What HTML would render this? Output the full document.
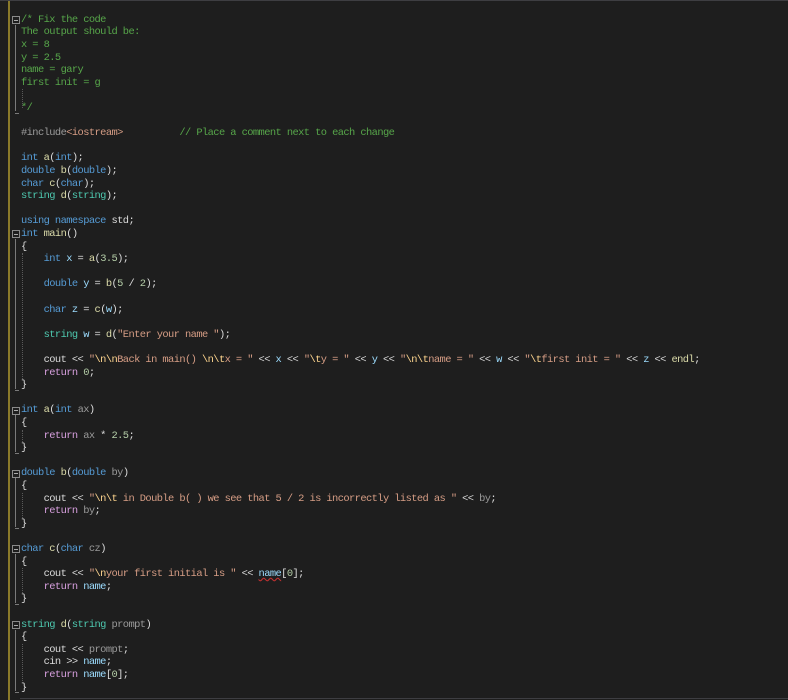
<!DOCTYPE html>
<html><head><meta charset="utf-8"><style>
html,body{margin:0;padding:0;background:#1e1e1e;width:788px;height:700px;overflow:hidden}
#ed{position:relative;width:788px;height:700px;background:#1e1e1e;border-top:1px solid #3e3e42;box-sizing:border-box;font-family:"Liberation Mono",monospace;font-size:10.4px;letter-spacing:-0.58px;color:#dcdcdc}
.l{position:absolute;left:21px;height:12.6px;line-height:12.6px;white-space:pre}
.k{color:#569cd6}.f{color:#dcdcaa}.v{color:#9cdcfe}.s{color:#d69d85}.e{color:#ffd68f}.n{color:#b5cea8}.c{color:#57a64a}.p{color:#9a9a9a}.r{color:#d8a0df}.t{color:#4ec9b0}.g{color:#9b9b9b}
.bar{position:absolute;left:8px;top:0;width:2px;height:700px;background:#8a7a2a}
.box{position:absolute;left:12px;width:6px;height:6px;border:1px solid #8a8a8a;box-sizing:content-box}
.box:after{content:"";position:absolute;left:1px;top:2.5px;width:4px;height:1px;background:#aaa}
.vl{position:absolute;left:15px;width:1px;background:#7a7a7a}
.hl{position:absolute;left:15px;width:4px;height:1px;background:#7a7a7a}
.dl{position:absolute;left:22px;width:0;border-left:1px dotted #5a5a5a}
.bot{position:absolute;left:20px;top:697px;width:768px;height:1px;background:#3e3e42}
</style></head><body><div id="ed">
<div class="bar"></div>
<div class="bot"></div>
<div id="code"></div>
<script>
var L=[
'<span class="c">/* Fix the code</span>',
'<span class="c">The output should be:</span>',
'<span class="c">x = 8</span>',
'<span class="c">y = 2.5</span>',
'<span class="c">name = gary</span>',
'<span class="c">first init = g</span>',
'',
'<span class="c">*/</span>',
'',
'<span class="g">#include</span><span class="s">&lt;iostream&gt;</span>          <span class="c">// Place a comment next to each change</span>',
'',
'<span class="k">int</span> <span class="f">a</span>(<span class="k">int</span>);',
'<span class="k">double</span> <span class="f">b</span>(<span class="k">double</span>);',
'<span class="k">char</span> <span class="f">c</span>(<span class="k">char</span>);',
'<span class="t">string</span> <span class="f">d</span>(<span class="t">string</span>);',
'',
'<span class="k">using namespace</span> std;',
'<span class="k">int</span> <span class="f">main</span>()',
'{',
'    <span class="k">int</span> <span class="v">x</span> = <span class="f">a</span>(<span class="n">3.5</span>);',
'',
'    <span class="k">double</span> <span class="v">y</span> = <span class="f">b</span>(<span class="n">5</span> / <span class="n">2</span>);',
'',
'    <span class="k">char</span> <span class="v">z</span> = <span class="f">c</span>(<span class="v">w</span>);',
'',
'    <span class="t">string</span> <span class="v">w</span> = <span class="f">d</span>(<span class="s">"Enter your name "</span>);',
'',
'    cout &lt;&lt; <span class="s">"<span class="e">\\n\\n</span>Back in main() <span class="e">\\n\\t</span>x = "</span> &lt;&lt; <span class="v">x</span> &lt;&lt; <span class="s">"<span class="e">\\t</span>y = "</span> &lt;&lt; <span class="v">y</span> &lt;&lt; <span class="s">"<span class="e">\\n\\t</span>name = "</span> &lt;&lt; <span class="v">w</span> &lt;&lt; <span class="s">"<span class="e">\\t</span>first init = "</span> &lt;&lt; <span class="v">z</span> &lt;&lt; <span class="f">endl</span>;',
'    <span class="r">return</span> <span class="n">0</span>;',
'}',
'',
'<span class="k">int</span> <span class="f">a</span>(<span class="k">int</span> <span class="p">ax</span>)',
'{',
'    <span class="r">return</span> <span class="p">ax</span> * <span class="n">2.5</span>;',
'}',
'',
'<span class="k">double</span> <span class="f">b</span>(<span class="k">double</span> <span class="p">by</span>)',
'{',
'    cout &lt;&lt; <span class="s">"<span class="e">\\n\\t</span> in Double b( ) we see that 5 / 2 is incorrectly listed as "</span> &lt;&lt; <span class="p">by</span>;',
'    <span class="r">return</span> <span class="p">by</span>;',
'}',
'',
'<span class="k">char</span> <span class="f">c</span>(<span class="k">char</span> <span class="p">cz</span>)',
'{',
'    cout &lt;&lt; <span class="s">"<span class="e">\\n</span>your first initial is "</span> &lt;&lt; <span class="v" style="text-decoration:underline wavy #c03030">name</span>[<span class="n">0</span>];',
'    <span class="r">return</span> <span class="v">name</span>;',
'}',
'',
'<span class="t">string</span> <span class="f">d</span>(<span class="t">string</span> <span class="p">prompt</span>)',
'{',
'    cout &lt;&lt; <span class="p">prompt</span>;',
'    cin &gt;&gt; <span class="v">name</span>;',
'    <span class="r">return</span> <span class="v">name</span>[<span class="n">0</span>];',
'}'
];
var T=12.7,P=12.6,h='';
for(var i=0;i<L.length;i++){h+='<div class="l" style="top:'+(T+i*P)+'px">'+L[i]+'</div>';}
var R=[[0,7],[17,29],[31,34],[36,40],[42,46],[48,53]];
R.forEach(function(r){
 var y0=T+r[0]*P, y1=T+r[1]*P;
 h+='<div class="box" style="top:'+(y0+2.5)+'px"></div>';
 h+='<div class="vl" style="top:'+(y0+11)+'px;height:'+(y1-y0-11+P-3)+'px"></div>';
 h+='<div class="hl" style="top:'+(y1+P-2)+'px"></div>';
 if(r[0]>0){h+='<div class="dl" style="top:'+(y0+2*P)+'px;height:'+((r[1]-r[0]-2)*P)+'px"></div>';}
 else{h+='<div class="dl" style="top:'+(y0+6*P)+'px;height:'+(P*1.5)+'px"></div>';}
});
document.getElementById('code').innerHTML=h;
</script>
</div></body></html>
